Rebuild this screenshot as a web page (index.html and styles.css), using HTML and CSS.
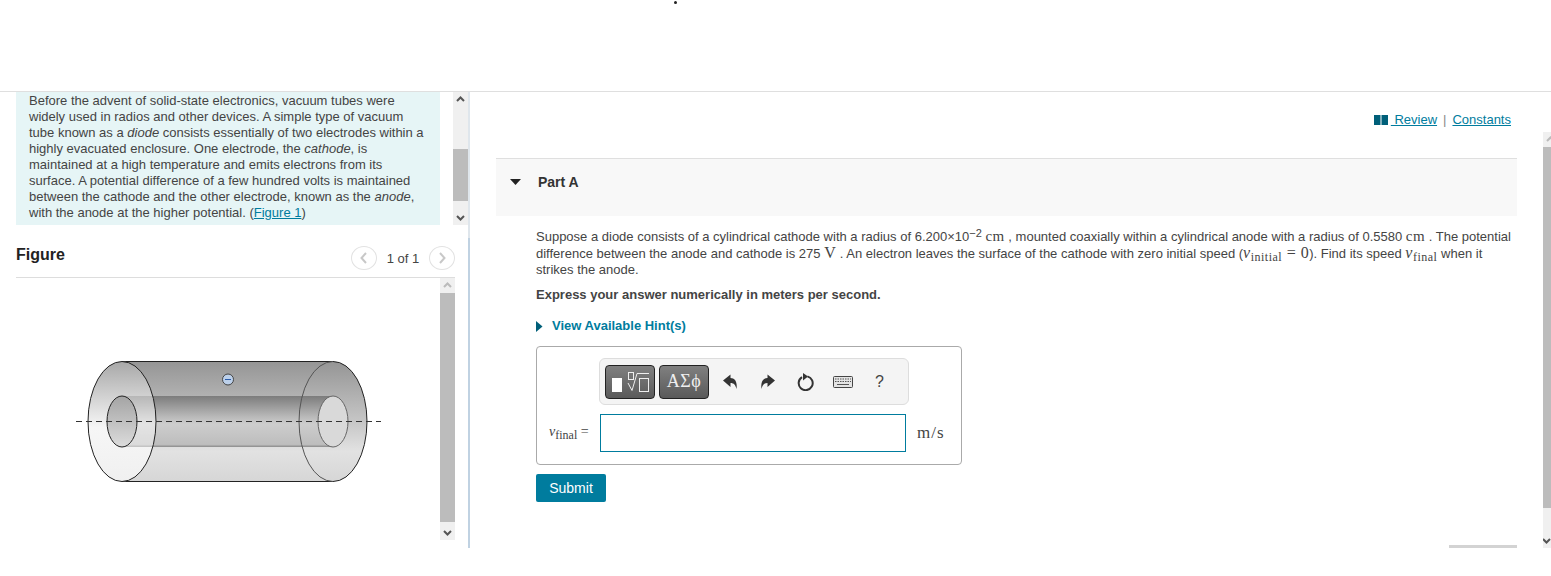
FILE: index.html
```html
<!DOCTYPE html>
<html>
<head>
<meta name="viewport" content="width=device-width, initial-scale=1">
<link rel="stylesheet" href="styles.css">
</head>
<body>

<div class="topbar"><span class="dot"></span></div>

<div class="main">

  <div class="leftCol">
    <div class="introRow">
      <div class="intro">
        Before the advent of solid-state electronics, vacuum tubes were
        widely used in radios and other devices. A simple type of vacuum
        tube known as a <i>diode</i> consists essentially of two electrodes within a
        highly evacuated enclosure. One electrode, the <i>cathode</i>, is
        maintained at a high temperature and emits electrons from its
        surface. A potential difference of a few hundred volts is maintained
        between the cathode and the other electrode, known as the <i>anode</i>,
        with the anode at the higher potential. (<a href="#">Figure 1</a>)
      </div>
      <div class="scroll scrollIntro">
        <div class="scrollBtn"><svg width="15" height="15" viewBox="0 0 15 15"><polyline class="chev" points="4,9 7.5,5.5 11,9"/></svg></div>
        <div class="thumb thumbIntro"></div>
        <div class="scrollRest"></div>
        <div class="scrollBtn"><svg width="15" height="15" viewBox="0 0 15 15"><polyline class="chev" points="4,6 7.5,9.5 11,6"/></svg></div>
      </div>
    </div>

    <div class="figureHead">
      <div class="figureTitle">Figure</div>
      <div class="pager">
        <span class="pageBtn"><svg width="10" height="14" viewBox="0 0 10 14"><polyline class="pageChev" points="7,2 2.5,7 7,12"/></svg></span>
        <span class="pageText">1 of 1</span>
        <span class="pageBtn"><svg width="10" height="14" viewBox="0 0 10 14"><polyline class="pageChev" points="3,2 7.5,7 3,12"/></svg></span>
      </div>
    </div>

    <div class="figureRow">
      <svg class="figure" width="424" height="262" viewBox="16 278 424 262">
        <defs>
          <linearGradient id="body" x1="0" y1="0" x2="0" y2="1">
            <stop offset="0" stop-color="#959595"/>
            <stop offset="0.5" stop-color="#c6c6c6"/>
            <stop offset="0.75" stop-color="#e2e2e2"/>
            <stop offset="1" stop-color="#d6d6d6"/>
          </linearGradient>
          <linearGradient id="tube" x1="0" y1="0" x2="0" y2="1">
            <stop offset="0" stop-color="#7c7c7c"/>
            <stop offset="0.4" stop-color="#b8b8b8"/>
            <stop offset="0.55" stop-color="#cdcdcd"/>
            <stop offset="0.95" stop-color="#bdbdbd"/>
            <stop offset="1" stop-color="#8a8a8a"/>
          </linearGradient>
          <linearGradient id="face" x1="0" y1="0" x2="0" y2="1">
            <stop offset="0" stop-color="#a8a8a8"/>
            <stop offset="0.55" stop-color="#f6f6f6"/>
            <stop offset="1" stop-color="#f0f0f0"/>
          </linearGradient>
          <linearGradient id="hole" x1="0" y1="0" x2="0" y2="1">
            <stop offset="0" stop-color="#a4a4a4"/>
            <stop offset="1" stop-color="#dcdcdc"/>
          </linearGradient>
          <clipPath id="faceClip"><ellipse cx="122" cy="421.5" rx="34" ry="60"/></clipPath>
        </defs>
        <!-- outer cylinder -->
        <path d="M122 361.5 H333 A34 60 0 0 1 333 481.5 H122 Z" fill="url(#body)"/>
        <line x1="122" y1="361.5" x2="333" y2="361.5" stroke="#222"/>
        <line x1="122" y1="481.5" x2="333" y2="481.5" stroke="#222"/>
        <path d="M333 361.5 A34 60 0 0 1 333 481.5" fill="none" stroke="#222"/>
        <ellipse cx="122" cy="421.5" rx="34" ry="60" fill="url(#face)"/>
        <!-- inner tube -->
        <rect x="122" y="396" width="211" height="51" fill="url(#tube)"/>
        <rect x="122" y="396" width="40" height="51" fill="#fff" fill-opacity="0.45" clip-path="url(#faceClip)"/>
        <ellipse cx="333" cy="421.5" rx="15" ry="25.5" fill="#d9d9d9" stroke="#666"/>
        <path d="M333 361.5 A34 60 0 0 0 333 481.5" fill="none" stroke="#555"/>
        <ellipse cx="122" cy="421.5" rx="34" ry="60" fill="none" stroke="#222"/>
        <ellipse cx="122" cy="421.5" rx="15" ry="25.5" fill="url(#hole)" stroke="#222"/>
        <line x1="76" y1="421.5" x2="381" y2="421.5" stroke="#333" stroke-dasharray="6 4"/>
        <circle cx="228" cy="379.5" r="5.5" fill="#bcd0ea" stroke="#444"/>
        <line x1="225" y1="379.5" x2="231" y2="379.5" stroke="#2a5caa"/>
      </svg>
      <div class="scroll scrollFigure">
        <div class="scrollBtn"><svg width="15" height="15" viewBox="0 0 15 15"><polyline class="chev chevLight" points="4,9 7.5,5.5 11,9"/></svg></div>
        <div class="thumb thumbFigure"></div>
        <div class="scrollRest"></div>
        <div class="scrollBtn"><svg width="15" height="15" viewBox="0 0 15 15"><polyline class="chev" points="4,6 7.5,9.5 11,6"/></svg></div>
      </div>
    </div>
  </div>

  <div class="rightCol">
    <div class="content">
      <div class="links">
        <svg class="book" width="14" height="10" viewBox="0 0 14 10"><path d="M0 0 H6.5 V10 H0 Z M7.5 0 H14 V10 H7.5 Z" fill="#005f79"/></svg>
        <a href="#">&nbsp;Review</a><span class="sep">|</span><a href="#">Constants</a>
      </div>

      <div class="partHead">
        <svg class="caret" width="11" height="6" viewBox="0 0 11 6"><polygon points="0,0 11,0 5.5,6" fill="#222"/></svg>
        <span>Part A</span>
      </div>

      <div class="question">
        <p class="problem">Suppose a diode consists of a cylindrical cathode with a radius of 6.200×10<sup>−2</sup> <span class="math">cm</span> , mounted coaxially within a cylindrical anode with a radius of 0.5580 <span class="math">cm</span> . The potential difference between the anode and cathode is 275 <span class="math mathBig">V</span> . An electron leaves the surface of the cathode with zero initial speed (<span class="math mathBig"><i>v</i><sub>initial</sub> = 0</span>). Find its speed <span class="math mathBig"><i>v</i><sub>final</sub></span> when it strikes the anode.</p>
        <p class="express">Express your answer numerically in meters per second.</p>
        <div class="hint">
          <svg width="7" height="11" viewBox="0 0 7 11"><polygon points="0,0 6.5,5.5 0,11" fill="#005f79"/></svg>
          <span>View Available Hint(s)</span>
        </div>

        <div class="answerBox">
          <div class="toolbar">
            <div class="toolBtn">
              <svg width="42" height="26" viewBox="0 0 42 26">
                <rect x="3" y="9" width="10" height="14" fill="#fff"/>
                <rect x="19.5" y="3.5" width="5" height="7" fill="none" stroke="#eee"/>
                <path d="M19 14 L23 21.5 L28 4.5 H40" fill="none" stroke="#eee"/>
                <rect x="30.5" y="9.5" width="9" height="13" fill="none" stroke="#eee"/>
              </svg>
            </div>
            <div class="toolBtn toolText">ΑΣϕ</div>
            <div class="toolIcons">
              <svg width="14" height="15" viewBox="0 0 14 15"><path d="M0 6.5 L7.5 0.5 V4 C12 4 14.5 8 13.5 15 C12.5 11 11 9 7.5 9 V13 Z" fill="#333"/></svg>
              <svg width="14" height="15" viewBox="0 0 14 15"><path d="M14 6.5 L6.5 0.5 V4 C2 4 -0.5 8 0.5 15 C1.5 11 3 9 6.5 9 V13 Z" fill="#333"/></svg>
              <svg width="17" height="18" viewBox="0 0 17 18"><path d="M5 4.2 A7 7 0 1 0 10.5 3.4" fill="none" stroke="#333" stroke-width="2"/><polygon points="6,0 6,7.5 11,3.5" fill="#333"/></svg>
              <svg width="20" height="12" viewBox="0 0 20 12"><rect x="0.5" y="0.5" width="19" height="11" rx="1" fill="#e4e4e4" stroke="#444"/><path d="M2 3 H18 M2 5.5 H18" stroke="#555" stroke-dasharray="1.5 1"/><path d="M4 8.5 H16" stroke="#555"/></svg>
              <span class="toolHelp">?</span>
            </div>
          </div>
          <div class="answerRow">
            <span class="answerLabel"><i>v</i><sub>final</sub> =</span>
            <div class="answerInput"></div>
            <span class="answerUnit">m/s</span>
          </div>
        </div>

        <button class="submit">Submit</button>
      </div>

      <div class="bottomBar"></div>
    </div>

    <div class="scroll scrollRight">
      <div class="scrollBtn"><svg width="8" height="15" viewBox="0 0 8 15"><polyline class="chev chevLight" points="4,9 7.5,5.5 11,9"/></svg></div>
      <div class="thumb thumbRight"></div>
      <div class="scrollRest"></div>
      <div class="scrollBtn"><svg width="8" height="15" viewBox="0 0 8 15"><polyline class="chev" points="0,6 3.5,9.5 7,6"/></svg></div>
    </div>
  </div>

</div>

</body>
</html>
```

FILE: styles.css
```css
body {
  margin: 0;
  height: 576px;
  overflow: hidden;
  background: #fff;
  color: #444;
  font-family: "Liberation Sans", Arial, sans-serif;
  font-size: 13px;
}

a {
  color: #007c9e;
}

.topbar {
  height: 90px;
  padding: 1px 0 0 674px;
  border-bottom: 1px solid #dfdfdf;
}

.dot {
  display: block;
  width: 3px;
  height: 3px;
  border-radius: 50%;
  background: #222;
}

.main {
  display: flex;
  height: 456px;
}

.leftCol {
  width: 452px;
  flex: none;
  border-right: 2px solid #c0d2e2;
  border-image: linear-gradient(#dfe6ec 146px, #c0d2e2 146px) 1;
  display: flex;
  flex-direction: column;
  padding-left: 16px;
}

.introRow {
  display: flex;
  height: 133px;
  flex: none;
}

.intro {
  width: 399px;
  height: 132px;
  padding: 1px 13px 0;
  background: #e6f5f6;
  line-height: 16px;
  margin-bottom: -1px;
}

.scroll {
  display: flex;
  flex-direction: column;
  flex: none;
  width: 15px;
  background: #f0f0f0;
}

.scrollIntro {
  margin-left: 13px;
}

.scrollBtn {
  height: 15px;
  flex: none;
  overflow: hidden;
}

.scrollBtn svg {
  display: block;
}

.scrollRest {
  flex: 1;
}

.chev {
  fill: none;
  stroke: #555;
  stroke-width: 2;
}

.chevLight {
  stroke: #bbb;
}

.thumb {
  background: #bcbcbc;
  flex: none;
}

.thumbIntro {
  height: 52px;
  margin-top: 42px;
}

.thumbFigure {
  height: 229px;
}

.thumbRight {
  height: 361px;
}

.figureHead {
  width: 439px;
  height: 53px;
  flex: none;
  box-sizing: border-box;
  border-bottom: 1px solid #ddd;
  display: flex;
  justify-content: space-between;
  align-items: center;
  padding-top: 6px;
}

.figureTitle {
  font-size: 16px;
  font-weight: bold;
  color: #222;
  margin-top: 1px;
}

.pager {
  display: flex;
  align-items: center;
  margin-top: 8px;
}

.pageBtn {
  width: 24px;
  height: 22px;
  border: 1px solid #e2e2e2;
  border-radius: 50%;
  display: flex;
  align-items: center;
  justify-content: center;
}

.pageChev {
  fill: none;
  stroke: #c8c8c8;
  stroke-width: 2;
}

.pageText {
  width: 52px;
  text-align: center;
}

.figureRow {
  display: flex;
  height: 262px;
  flex: none;
}

.figure {
  display: block;
  flex: none;
}

.rightCol {
  flex: 1;
  display: flex;
}

.content {
  width: 1021px;
  flex: none;
  margin-left: 26px;
  display: flex;
  flex-direction: column;
}

.links {
  height: 66px;
  flex: none;
  box-sizing: border-box;
  display: flex;
  justify-content: flex-end;
  align-items: flex-start;
  padding: 20px 6px 0 0;
  line-height: 15px;
}

.book {
  margin: 3px 3px 0 0;
}

.sep {
  color: #888;
  margin: 0 6px;
}

.partHead {
  height: 58px;
  flex: none;
  box-sizing: border-box;
  border-top: 1px solid #dfdfdf;
  background: #f8f8f8;
  display: flex;
  align-items: flex-start;
  padding: 16px 0 0 14px;
  font-size: 14px;
  font-weight: bold;
  color: #333;
  line-height: 15px;
}

.caret {
  margin: 4px 17px 0 0;
}

.question {
  padding: 13px 0 0 40px;
  flex: 1;
}

.problem {
  margin: 0;
  height: 50px;
  line-height: 16.5px;
}

.problem sup {
  font-size: 11px;
  line-height: 0;
  vertical-align: 4px;
}

.math {
  font-family: "Liberation Serif", serif;
  font-size: 15px;
  letter-spacing: 0.5px;
  line-height: 0;
}

.mathBig {
  font-size: 16px;
}

.math sub,
.answerLabel sub {
  font-size: 12px;
  line-height: 0;
  vertical-align: -3px;
}

.express {
  margin: 8px 0 0;
  font-weight: bold;
  line-height: 16px;
}

.hint {
  margin-top: 15px;
  display: flex;
  align-items: center;
  gap: 9px;
  color: #007c9e;
  font-weight: bold;
  line-height: 16px;
}

.answerBox {
  width: 362px;
  height: 106px;
  margin-top: 12px;
  border: 1px solid #aaa;
  border-radius: 4px;
  display: flex;
  flex-direction: column;
  padding: 11px 0 0 62px;
}

.toolbar {
  width: 303px;
  height: 45px;
  border: 1px solid #ddd;
  border-radius: 6px;
  background: #f4f4f4;
  display: flex;
  align-items: center;
  gap: 4px;
  padding-left: 5px;
  flex: none;
}

.toolBtn {
  width: 48px;
  height: 32px;
  border: 1px solid #222;
  border-radius: 4px;
  background: linear-gradient(#808080, #5a5a5a);
  display: flex;
  align-items: center;
  justify-content: center;
}

.toolText {
  color: #eee;
  font-family: "Liberation Serif", serif;
  font-size: 18px;
  letter-spacing: 0.5px;
}

.toolIcons {
  display: grid;
  grid-template-columns: 38px 38px 37px 37px 37px;
  justify-items: center;
  align-items: center;
  margin-left: -2px;
}

.toolHelp {
  color: #444;
  font-size: 16px;
}

.answerRow {
  display: flex;
  align-items: center;
  margin-top: 9px;
  margin-left: -50px;
}

.answerLabel {
  width: 51px;
  font-family: "Liberation Serif", serif;
  font-size: 14px;
  flex: none;
  padding-bottom: 2px;
}

.answerInput {
  width: 304px;
  height: 36px;
  border: 1px solid #007c9e;
  background: #fff;
  flex: none;
}

.answerUnit {
  margin-left: 11px;
  font-family: "Liberation Serif", serif;
  font-size: 17px;
  letter-spacing: 1px;
}

.submit {
  display: block;
  width: 70px;
  height: 28px;
  margin-top: 9px;
  border: none;
  border-radius: 2px;
  background: #007c9e;
  color: #fff;
  font-family: "Liberation Sans", Arial, sans-serif;
  font-size: 14px;
}

.bottomBar {
  width: 68px;
  height: 3px;
  flex: none;
  margin-left: auto;
  background: #d3d3d3;
}

.scrollRight {
  width: 8px;
  margin: 40px 0 0 26px;
}
```
